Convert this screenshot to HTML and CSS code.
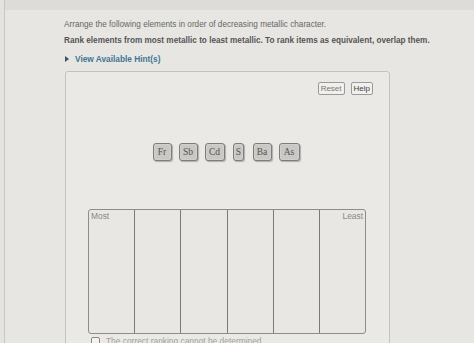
FILE: index.html
```html
<!DOCTYPE html>
<html>
<head>
<meta charset="utf-8">
<link rel="stylesheet" href="styles.css">
</head>
<body>
<div class="screen">
  <div class="topbar"></div>
  <div class="content">
    <p class="q">Arrange the following elements in order of decreasing metallic character.</p>
    <p class="instr">Rank elements from most metallic to least metallic. To rank items as equivalent, overlap them.</p>
    <div class="hint"><span class="tri"></span><span class="hint-text">View Available Hint(s)</span></div>
    <div class="panel">
      <div class="tools">
        <span class="btn">Reset</span>
        <span class="btn help">Help</span>
      </div>
      <div class="tiles">
        <span class="tile">Fr</span>
        <span class="tile">Sb</span>
        <span class="tile w20">Cd</span>
        <span class="tile narrow">S</span>
        <span class="tile">Ba</span>
        <span class="tile w21">As</span>
      </div>
      <div class="rank">
        <div class="col"><span class="lab">Most</span></div>
        <div class="col"></div>
        <div class="col"></div>
        <div class="col"></div>
        <div class="col"></div>
        <div class="col right"><span class="lab">Least</span></div>
      </div>
      <div class="cbrow"><span class="cb"></span><span class="cbtext">The correct ranking cannot be determined.</span></div>
    </div>
  </div>
</div>
</body>
</html>
```

FILE: styles.css
```css
html, body {
  margin: 0;
  padding: 0;
  background: #e5e3df;
  overflow: hidden;
}
body {
  font-family: "Liberation Sans", Arial, sans-serif;
  width: 474px;
  height: 343px;
}
.screen {
  margin-left: 4px;
  border-left: 1px solid #c9c7c3;
  height: 343px;
  background: #e8e6e2;
  overflow: hidden;
}
.topbar {
  height: 10px;
  background: #dedcd8;
}
.content {
  padding-left: 59px;
}
.q {
  margin: 10px 0 0 0;
  font-size: 8.2px;
  line-height: 10px;
  color: #666;
}
.instr {
  margin: 6px 0 0 0;
  font-size: 8.2px;
  line-height: 10px;
  font-weight: bold;
  color: #555;
}
.hint {
  margin-top: 8px;
  display: flex;
  align-items: center;
  height: 10px;
}
.tri {
  width: 0;
  height: 0;
  border-left: 4px solid #3d5566;
  border-top: 3px solid transparent;
  border-bottom: 3px solid transparent;
  margin-left: 1px;
  margin-right: 6px;
}
.hint-text {
  font-size: 8.3px;
  font-weight: bold;
  color: #3f7694;
}
.panel {
  margin-top: 7px;
  margin-left: 1px;
  width: 325px;
  height: 290px;
  border: 1px solid #c4c2be;
  border-radius: 3px;
  background: #ebe9e5;
  box-sizing: border-box;
}
.tools {
  display: flex;
  justify-content: flex-end;
  gap: 6px;
  padding: 10px 16px 0 0;
}
.btn {
  display: flex;
  align-items: center;
  justify-content: center;
  height: 11px;
  padding: 0 2px;
  border: 1px solid #9a9a9a;
  border-radius: 2px;
  background: #f1f0ed;
  font-size: 8px;
  color: #777;
}
.btn.help {
  color: #444;
}
.tiles {
  display: flex;
  justify-content: center;
  gap: 7px;
  margin-top: 48px;
  margin-left: -3px;
}
.tile {
  width: 17px;
  height: 16px;
  display: flex;
  align-items: center;
  justify-content: center;
  border: 1px solid #7d7d7b;
  border-radius: 3px;
  background: #c9c8c4;
  box-shadow: 1px 1px 1px rgba(0,0,0,0.25), inset 0 0 2px rgba(255,255,255,0.5);
  font-family: "Liberation Serif", "Times New Roman", serif;
  font-size: 9.5px;
  color: #555;
}
.tile.w20 { width: 18px; }
.tile.w21 { width: 19px; }
.tile.narrow {
  width: 9px;
  margin: 0 1.5px;
}
.rank {
  display: flex;
  margin: 48px 0 0 22px;
  width: 278px;
  height: 125px;
  border: 1px solid #8d8d8b;
  border-radius: 3px;
  box-sizing: border-box;
  background: #e9e7e3;
}
.col {
  flex: 1;
  border-right: 1.5px solid #7a7a78;
}
.col.right {
  border-right: none;
  text-align: right;
}
.lab {
  display: block;
  padding: 1px 2px 0 2px;
  font-size: 8.4px;
  color: #888;
}
.cbrow {
  display: flex;
  align-items: center;
  margin: 2px 0 0 25px;
  gap: 6px;
}
.cb {
  width: 7px;
  height: 7px;
  border: 1px solid #888;
  border-radius: 2px;
  background: #f4f3f0;
}
.cbtext {
  font-size: 8.4px;
  color: #a0a09c;
}
```
